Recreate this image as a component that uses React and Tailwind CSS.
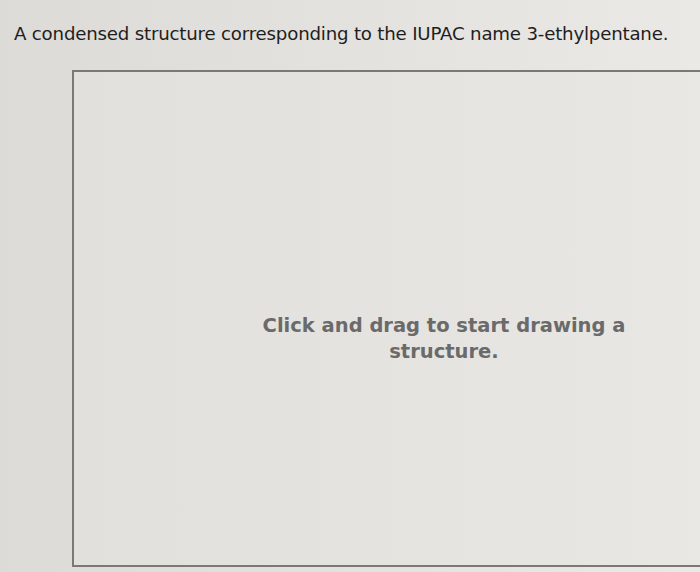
import React from 'react';

export default function App() {
  return (
    <div
      className="w-[700px] h-[572px] overflow-hidden bg-gradient-to-r from-[#dddbd7] via-[#e4e2de] to-[#ebe9e6] text-[#222]"
      style={{ fontFamily: '"DejaVu Sans", Verdana, sans-serif' }}
    >
      <h1 className="pl-[14px] pt-[20px] text-[18.2px] leading-[28px] font-normal tracking-[-0.2px] text-[#1e1e1e] whitespace-nowrap">
        A condensed structure corresponding to the IUPAC name 3-ethylpentane.
      </h1>
      <div className="ml-[72px] mt-[22px] w-[760px] h-[497px] border-l-2 border-t-2 border-b-2 border-[#7a7978] bg-gradient-to-r from-[#e2e0dc] via-[#e6e4e1] to-[#ebe9e6] flex justify-center pt-[241px]">
        <p className="w-[400px] mr-[18px] text-center text-[19.5px] leading-[26px] font-bold text-[#6a6a6a]">
          Click and drag to start drawing a structure.
        </p>
      </div>
    </div>
  );
}
